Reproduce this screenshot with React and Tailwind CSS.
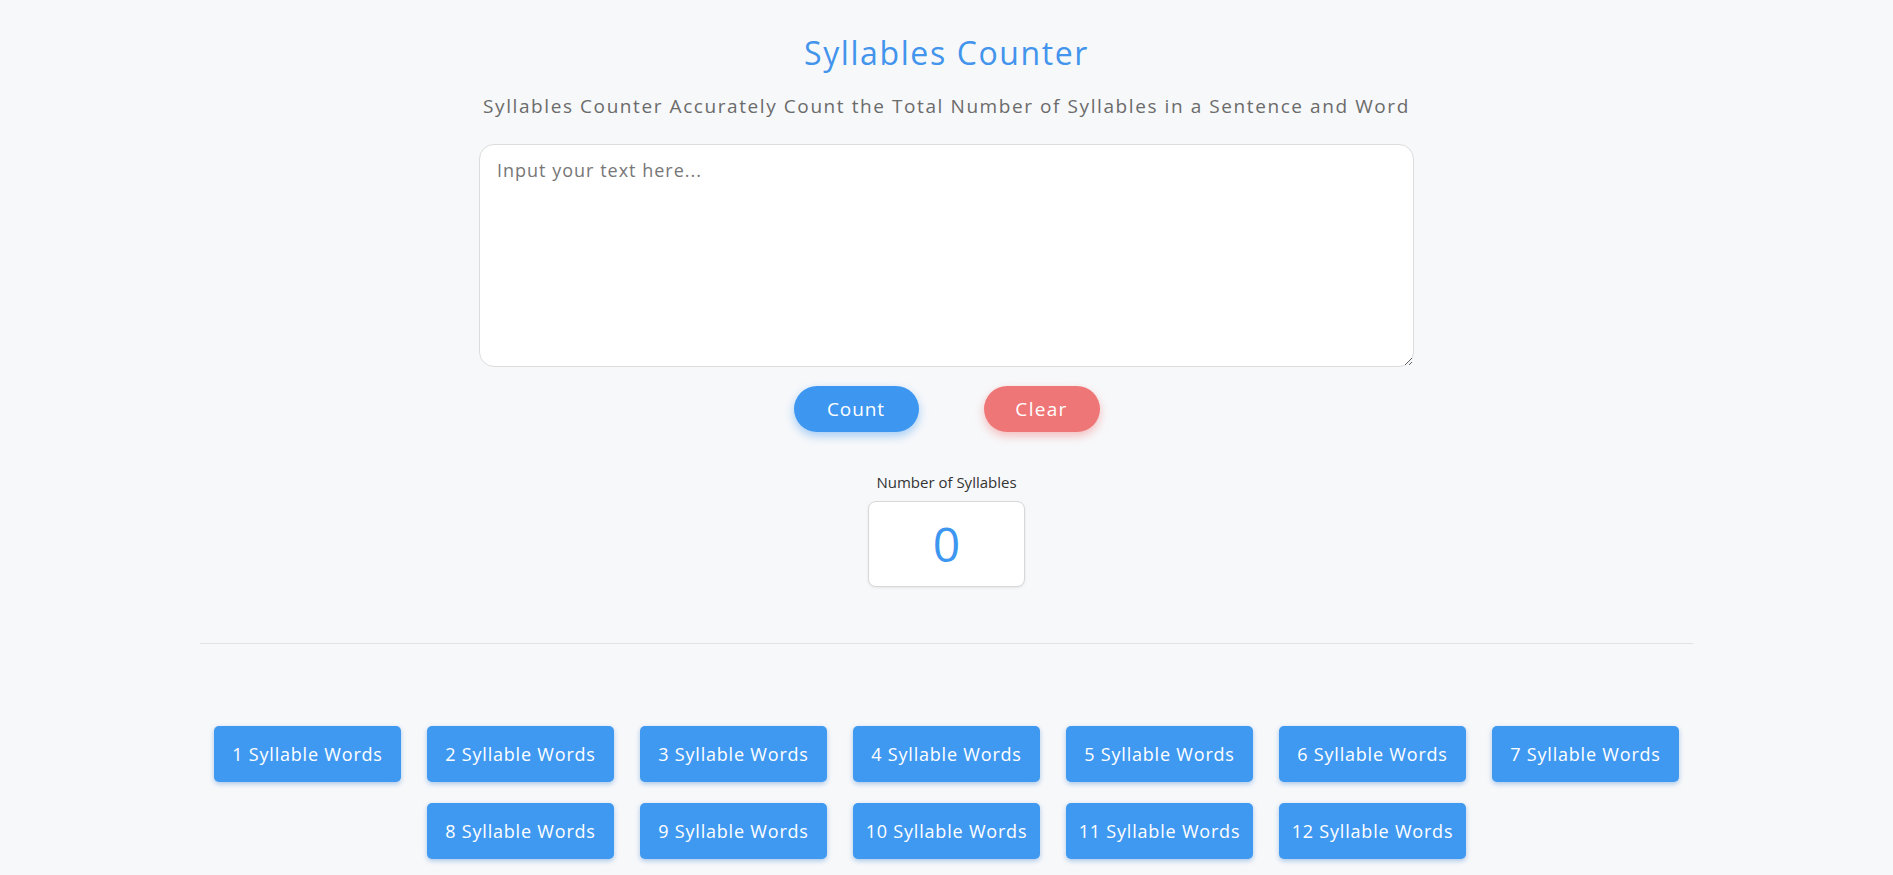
import { useState } from "react";

const wordButtons = [
  "1 Syllable Words",
  "2 Syllable Words",
  "3 Syllable Words",
  "4 Syllable Words",
  "5 Syllable Words",
  "6 Syllable Words",
  "7 Syllable Words",
  "8 Syllable Words",
  "9 Syllable Words",
  "10 Syllable Words",
  "11 Syllable Words",
  "12 Syllable Words",
];

function countSyllables(text) {
  const words = text.toLowerCase().match(/[a-z]+/g) || [];
  let total = 0;
  words.forEach((w) => {
    if (w.length <= 3) {
      total += 1;
      return;
    }
    const cleaned = w.replace(/(?:[^laeiouy]es|ed|[^laeiouy]e)$/, "").replace(/^y/, "");
    const groups = cleaned.match(/[aeiouy]{1,2}/g);
    total += groups ? groups.length : 1;
  });
  return total;
}

export default function App() {
  const [text, setText] = useState("");
  const [count, setCount] = useState(0);

  return (
    <div className="min-h-screen bg-[#f7f8fa] font-['Open_Sans',sans-serif]">
      <div className="flex flex-col items-center pt-[33px] pb-10">
        {/* Heading */}
        <h1 className="text-[32px] leading-[40px] text-[#4294ec] tracking-[1.6px]">Syllables Counter</h1>
        <p className="mt-[19px] text-[19px] leading-[28px] text-[#6b6b6b] tracking-[1.58px]">
          Syllables Counter Accurately Count the Total Number of Syllables in a Sentence and Word
        </p>

        {/* Input */}
        <textarea
          value={text}
          onChange={(e) => setText(e.target.value)}
          placeholder="Input your text here..."
          className="mt-[24px] w-[935px] h-[223px] rounded-[15px] border border-[#dcdcdc] bg-white px-[17px] py-[12px] text-[18px] leading-[27px] tracking-[1px] text-[#444] placeholder:text-[#777] outline-none"
        />

        <div className="mt-[19px] flex gap-[65px]">
          <button
            onClick={() => setCount(countSyllables(text))}
            className="w-[125px] h-[46px] rounded-full bg-[#3d97f0] text-white text-[19px] tracking-[0.9px] shadow-[0_4px_10px_rgba(61,151,240,0.45)]"
          >
            Count
          </button>
          <button
            onClick={() => {
              setText("");
              setCount(0);
            }}
            className="w-[116px] h-[46px] rounded-full bg-[#ef7676] text-white text-[19px] tracking-[1.3px] shadow-[0_4px_10px_rgba(239,118,118,0.45)]"
          >
            Clear
          </button>
        </div>

        {/* Result */}
        <div className="mt-[40px] text-[15px] leading-[20px] text-[#333]">Number of Syllables</div>
        <div className="mt-[9px] w-[157px] h-[86px] flex items-center justify-center rounded-[8px] border border-[#d8d8d8] bg-white text-[48px] text-[#3d97f0] shadow-[0_1px_3px_rgba(0,0,0,0.08)]">
          {count}
        </div>

        <hr className="mt-[56px] w-[1493px] border-t border-[#e2e2e2]" />

        {/* Word lists */}
        <div className="mt-[82px] w-[1493px] px-[14px] flex flex-wrap justify-center gap-x-[26px] gap-y-[21px]">
          {wordButtons.map((label) => (
            <a
              key={label}
              href="#"
              className="w-[187px] h-[56px] flex items-center justify-center rounded-[5px] bg-[#3f99f1] text-white text-[18px] tracking-[0.8px] shadow-[0_2px_5px_rgba(30,110,200,0.35)]"
            >
              {label}
            </a>
          ))}
        </div>
      </div>
    </div>
  );
}
